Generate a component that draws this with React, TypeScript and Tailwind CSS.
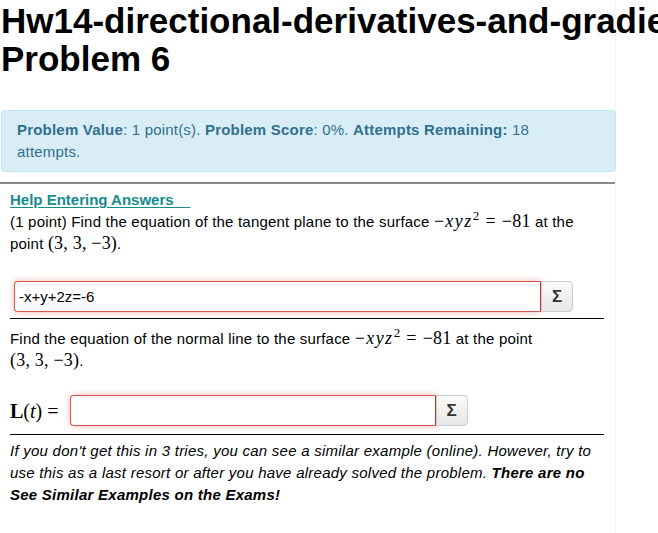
import React from "react";

const sans = { fontFamily: '"Liberation Sans", Arial, sans-serif' };

function M({ children }: { children: React.ReactNode }) {
  return (
    <span className="text-[18px] leading-none whitespace-nowrap" style={{ fontFamily: '"Liberation Serif", "DejaVu Serif", serif' }}>
      {children}
    </span>
  );
}

function Surface() {
  return (
    <M>
      <span className="mr-[1px]">−</span>
      <i className="tracking-[1.5px]">xyz</i>
      <span className="text-[13px] relative -top-[7px] leading-none">2</span>
      <span className="mx-[6px]">=</span>
      −81
    </M>
  );
}

function Point() {
  return <M>(3, 3, −3)</M>;
}

function Sigma() {
  return (
    <button className="w-[32px] h-[31px] border border-[#ccc] rounded-r-[4px] bg-gradient-to-b from-[#fafafa] to-[#e6e6e6] flex items-center justify-center text-[17px] font-bold text-[#333]">
      Σ
    </button>
  );
}

function AnswerBox({ value, width }: { value: string; width: string }) {
  return (
    <div className="flex items-center">
      <div
        className={`${width} h-[31px] border border-[#d9534f] border-r-[#c9302c] rounded-l-[4px] bg-white shadow-[0_0_6px_rgba(217,83,79,0.45)] flex items-center px-[4px] text-[15px] text-black`}
      >
        {value}
      </div>
      <Sigma />
    </div>
  );
}

export default function App() {
  return (
    <div className="w-[658px] h-[533px] overflow-hidden bg-white text-black" style={sans}>
      <div className="w-[616px] h-full border-r border-[#f3f3f3]">
        <h1 className="text-[35px] font-bold leading-[38px] whitespace-nowrap pt-[2px] pl-[1px]">
          Hw14-directional-derivatives-and-gradient
          <br />
          Problem 6
        </h1>

        <div className="mt-[32px] ml-[1px] w-[615px] bg-[#d9edf7] border border-[#bce8f1] rounded-[4px] text-[#31708f] text-[15px] tracking-[0.2px] leading-[22px] pl-[15px] pr-[40px] py-[8px]">
          <b>Problem Value</b>: 1 point(s). <b>Problem Score</b>: 0%. <b>Attempts Remaining:</b> 18 attempts.
        </div>

        <div className="mt-[10px] h-[2px] bg-[#8a8a8a]" />

        <div className="pl-[10px] pr-[11px] text-[15px] leading-[22px]">
          <div className="mt-[5px]">
            <a className="font-bold text-[#168c8c] underline underline-offset-[2px] whitespace-pre">Help Entering Answers    </a>
          </div>
          <p className="tracking-[0.2px]">
            (1 point) Find the equation of the tangent plane to the surface <Surface /> at the point <Point />.
          </p>

          <div className="mt-[26px] pl-[4px]">
            <AnswerBox value="-x+y+2z=-6" width="w-[527px]" />
          </div>

          <div className="mt-[6px] h-px bg-black" />

          <p className="mt-[9px] tracking-[0.2px]">
            Find the equation of the normal line to the surface <Surface /> at the point <Point />.
          </p>

          <div className="mt-[23px] flex items-center">
            <span className="text-[20px] mr-[11px] whitespace-nowrap" style={{ fontFamily: '"Liberation Serif", serif' }}>
              <b>L</b>(<i>t</i>) =
            </span>
            <AnswerBox value="" width="w-[366px]" />
          </div>

          <div className="mt-[8px] h-px bg-black" />

          <p className="mt-[5px] italic tracking-[0.25px]">
            If you don't get this in 3 tries, you can see a similar example (online). However, try to use this as a last resort or after you have already solved the problem. <b>There are no See Similar Examples on the Exams!</b>
          </p>
        </div>
      </div>
    </div>
  );
}
